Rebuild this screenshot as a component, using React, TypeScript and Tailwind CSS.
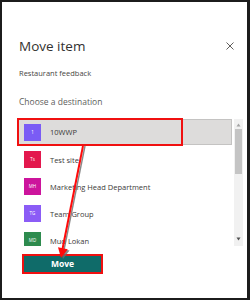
import React from "react";

const rows = [
  { initials: "1", name: "10WWP", color: "bg-[#7a5cf5]", selected: true },
  { initials: "Ts", name: "Test site", color: "bg-[#e3184d]", selected: false },
  { initials: "MH", name: "Marketing Head Department", color: "bg-[#cc149c]", selected: false },
  { initials: "TG", name: "Team Group", color: "bg-[#8b5cf6]", selected: false },
  { initials: "MD", name: "Mud Lokan", color: "bg-[#2e8b4e]", selected: false },
];

export default function App() {
  return (
    <div className="relative w-[250px] h-[300px] bg-white border-2 border-r-[3px] border-[#1c1c1c] overflow-hidden font-['Segoe_UI','Open_Sans',sans-serif] text-[#323130]">
      {/* header */}
      <div className="mt-[34px] ml-[17px] mr-[12px] flex items-center justify-between h-[20px]">
        <div className="text-[13.5px] leading-[20px] text-[#323130]">Move item</div>
        <svg width="8" height="8" viewBox="0 0 8 8" className="mr-[1px]">
          <path d="M0.5 0.5 L7.5 7.5 M7.5 0.5 L0.5 7.5" stroke="#605e5c" strokeWidth="1" />
        </svg>
      </div>
      <div className="mt-[11px] ml-[17px] text-[7.5px] leading-[12px] text-[#484644]">Restaurant feedback</div>
      <div className="mt-[17px] ml-[17px] text-[8.5px] leading-[12px] text-[#605e5c]">Choose a destination</div>

      {/* list */}
      <div className="mt-[10px] ml-[15px] w-[227px] h-[128px] flex gap-[2px] overflow-hidden">
        <div className="w-[215px] flex flex-col pt-[1px]">
          {rows.map((r) => (
            <div
              key={r.name}
              className={
                r.selected
                  ? "h-[26px] mb-[1px] shrink-0 flex items-center bg-[#dddcdb] border border-[#c4c3c2]"
                  : "h-[27px] shrink-0 flex items-center border border-transparent"
              }
            >
              <div
                className={`ml-[6px] w-[17px] h-[17px] shrink-0 flex items-center justify-center ${r.color} text-white text-[4.5px] leading-none`}
              >
                {r.initials}
              </div>
              <div className="ml-[9px] text-[7.5px] leading-[10px] whitespace-nowrap text-[#3b3a39]">{r.name}</div>
            </div>
          ))}
        </div>
        {/* scrollbar */}
        <div className="w-[9px] mt-[1px] flex flex-col items-center bg-[#f1f1f1]">
          <svg width="5" height="4" viewBox="0 0 5 4" className="mt-[4px]">
            <path d="M2.5 0.5 L4.5 3.5 L0.5 3.5 Z" fill="#a3a3a3" />
          </svg>
          <div className="mt-[2px] w-[7px] h-[45px] bg-[#c4c4c4]" />
          <div className="flex-1" />
          <svg width="5" height="4" viewBox="0 0 5 4" className="mb-[5px]">
            <path d="M0.5 0.5 L4.5 0.5 L2.5 3.5 Z" fill="#505050" />
          </svg>
        </div>
      </div>

      {/* move button with red highlight */}
      <div className="mt-[8px] ml-[20px] w-[81px] h-[20px] border-2 border-[#f01010]">
        <button className="w-full h-full bg-[#0f6b69] text-white text-[8.5px] font-bold leading-none flex items-center justify-center">
          Move
        </button>
      </div>

      {/* red annotation box around selected row */}
      <div className="absolute left-[15px] top-[116px] w-[166px] h-[28px] border-2 border-[#f01010] pointer-events-none" />

      {/* arrow annotation */}
      <svg className="absolute left-[-2px] top-[-2px] pointer-events-none" width="250" height="300" viewBox="0 0 250 300">
        <line x1="85" y1="146" x2="64" y2="250" stroke="#6b6b6b" strokeWidth="1.4" opacity="0.8" />
        <path d="M69.5 250.5 L63 259 L60 248.5 Z" fill="#6b6b6b" opacity="0.8" />
        <line x1="83" y1="146" x2="62.5" y2="249" stroke="#ff0a0a" strokeWidth="2" />
        <path d="M67.8 249.2 L61 258 L58 247.2 Z" fill="#ff0a0a" />
      </svg>
    </div>
  );
}
